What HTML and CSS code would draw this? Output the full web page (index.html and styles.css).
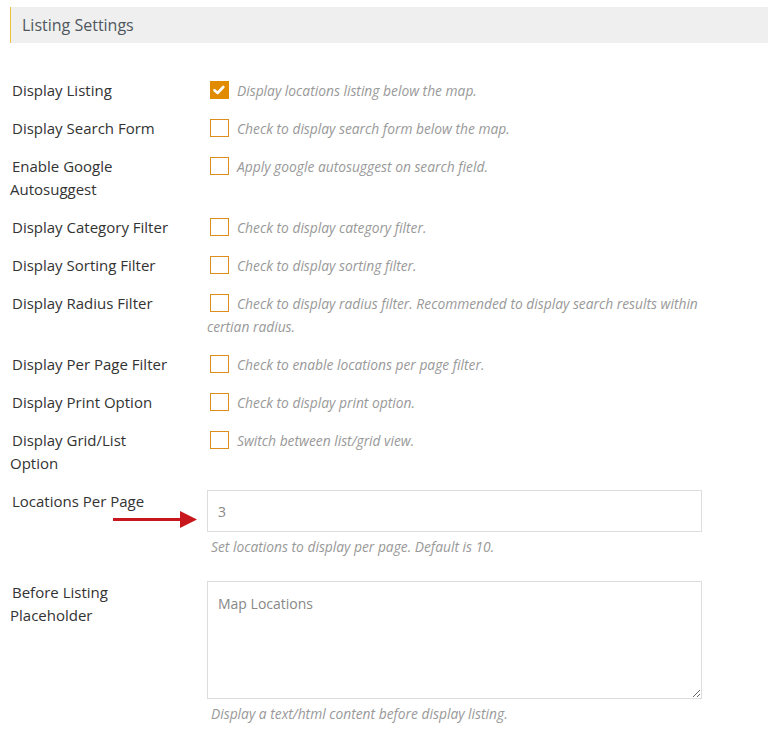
FILE: index.html
```html
<!DOCTYPE html>
<html lang="en">
<head>
<meta charset="utf-8">
<title>Listing Settings</title>
<link rel="stylesheet" href="styles.css">
</head>
<body>
<div class="wrap">
  <h2 class="section-title">Listing Settings</h2>
  <div class="form">
    <div class="row">
      <div class="label">Display Listing</div>
      <div class="field"><span class="cb checked"><svg viewBox="0 0 18 18" width="18" height="18"><path d="M4.5 9.2 L7.6 12 L13.3 6" fill="none" stroke="#fff" stroke-width="2.6" stroke-linecap="round" stroke-linejoin="round"/></svg></span>Display locations listing below the map.</div>
    </div>
    <div class="row">
      <div class="label">Display Search Form</div>
      <div class="field"><span class="cb"></span>Check to display search form below the map.</div>
    </div>
    <div class="row">
      <div class="label">Enable Google Autosuggest</div>
      <div class="field"><span class="cb"></span>Apply google autosuggest on search field.</div>
    </div>
    <div class="row">
      <div class="label">Display Category Filter</div>
      <div class="field"><span class="cb"></span>Check to display category filter.</div>
    </div>
    <div class="row">
      <div class="label">Display Sorting Filter</div>
      <div class="field"><span class="cb"></span>Check to display sorting filter.</div>
    </div>
    <div class="row">
      <div class="label">Display Radius Filter</div>
      <div class="field"><span class="cb"></span>Check to display radius filter. Recommended to display search results within certian radius.</div>
    </div>
    <div class="row">
      <div class="label">Display Per Page Filter</div>
      <div class="field"><span class="cb"></span>Check to enable locations per page filter.</div>
    </div>
    <div class="row">
      <div class="label">Display Print Option</div>
      <div class="field"><span class="cb"></span>Check to display print option.</div>
    </div>
    <div class="row">
      <div class="label">Display Grid/List Option</div>
      <div class="field"><span class="cb"></span>Switch between list/grid view.</div>
    </div>
    <div class="row annotated">
      <div class="label">Locations Per Page</div>
      <div class="field plain">
        <input class="text-input" type="text" value="3">
        <p class="help">Set locations to display per page. Default is 10.</p>
      </div>
      <svg class="arrow" width="86" height="18" viewBox="0 0 86 18"><line x1="0" y1="9.5" x2="70" y2="9.5" stroke="#c8161d" stroke-width="3"/><polygon points="67,1 84,9.5 67,18" fill="#c8161d"/></svg>
    </div>
    <div class="row">
      <div class="label">Before Listing Placeholder</div>
      <div class="field plain">
        <textarea class="textarea">Map Locations</textarea>
        <p class="help">Display a text/html content before display listing.</p>
      </div>
    </div>
  </div>
</div>
</body>
</html>
```

FILE: styles.css
```css
html, body {
  margin: 0;
  padding: 0;
  background: #fff;
}
body {
  font-family: "Open Sans", "Noto Sans", sans-serif;
}
.wrap {
  padding: 7px 9px 0 10px;
}
.section-title {
  margin: 0;
  height: 36px;
  line-height: 36px;
  background: #efefef;
  border-left: 1px solid #f2c23a;
  padding-left: 11px;
  font-size: 16px;
  font-weight: 400;
  color: #50575e;
}
.form {
  margin-top: 36px;
  display: flex;
  flex-direction: column;
  gap: 15px;
}
.row {
  display: grid;
  grid-template-columns: 197px 495px;
  align-items: start;
}
.annotated {
  position: relative;
}
.label {
  font-size: 15px;
  line-height: 23px;
  color: #333;
  text-indent: 2px;
  padding-right: 35px;
}
.field {
  font-size: 13.8px;
  font-style: italic;
  line-height: 23px;
  color: #999;
}
.field.plain {
  font-style: normal;
}
.cb {
  display: inline-block;
  box-sizing: border-box;
  width: 19px;
  height: 18px;
  border: 1px solid #dc8d1c;
  background: #fff;
  vertical-align: top;
  margin: 2px 8px 0 3px;
}
.cb svg {
  display: block;
  margin: -1px;
}
.cb.checked {
  background: #e08b00;
  border-color: #e08b00;
}
.text-input {
  display: block;
  box-sizing: border-box;
  width: 495px;
  height: 42px;
  margin: 0;
  border: 1px solid #ddd;
  border-radius: 0;
  padding: 0 10px;
  font-family: "Open Sans", "Noto Sans", sans-serif;
  font-size: 14px;
  color: #888;
  background: #fff;
  outline: none;
}
.textarea {
  display: block;
  box-sizing: border-box;
  width: 495px;
  height: 118px;
  margin: 0;
  border: 1px solid #ddd;
  border-radius: 0;
  padding: 10px;
  font-family: "Open Sans", "Noto Sans", sans-serif;
  font-size: 14px;
  line-height: 23px;
  color: #888;
  background: #fff;
  outline: none;
}
.help {
  margin: 3px 0 8px;
  padding-left: 4px;
  font-size: 13.8px;
  font-style: italic;
  line-height: 23px;
  color: #999;
}
.arrow {
  position: absolute;
  left: 103px;
  top: 20px;
}
```
